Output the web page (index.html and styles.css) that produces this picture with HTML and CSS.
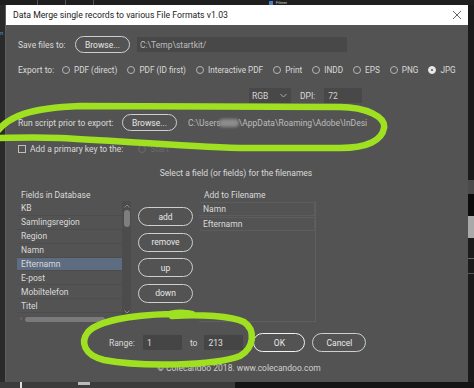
FILE: index.html
```html
<!DOCTYPE html>
<html>
<head>
<meta charset="utf-8">
<link rel="stylesheet" href="styles.css">
</head>
<body>
<div class="screen">
  <div class="topstrip">
    <span class="tsep s1"></span><span class="tsep s2"></span><span class="tsep s3"></span>
    <span class="filmer"><i class="ficon"></i>Filmer</span>
  </div>
  <div class="middle">
    <div class="leftstrip"><span class="lchar">n</span></div>
    <div class="dialog">
      <div class="titlebar">
        <span class="title">Data Merge single records to various File Formats v1.03</span>
        <svg class="close" width="10" height="10" viewBox="0 0 10 10"><path d="M1 1L9 9M9 1L1 9" stroke="#666" stroke-width="1" fill="none"/></svg>
      </div>
      <div class="dbody">
        <div class="row r-save">
          <span class="lbl w-save">Save files to:</span>
          <button class="pill b-save">Browse...</button>
          <div class="field pathfield">C:\Temp\startkit/</div>
        </div>
        <div class="row r-export">
          <span class="lbl w-export">Export to:</span>
          <div class="radios">
            <span class="radio"><i class="rc"></i>PDF (direct)</span>
            <span class="radio"><i class="rc"></i>PDF (ID first)</span>
            <span class="radio"><i class="rc"></i>Interactive PDF</span>
            <span class="radio"><i class="rc"></i>Print</span>
            <span class="radio"><i class="rc"></i>INDD</span>
            <span class="radio"><i class="rc"></i>EPS</span>
            <span class="radio"><i class="rc"></i>PNG</span>
            <span class="radio"><i class="rc on"></i>JPG</span>
          </div>
        </div>
        <div class="row r-rgb">
          <div class="select">RGB<svg class="chev" width="7" height="5" viewBox="0 0 7 5"><path d="M0.5 1L3.5 4L6.5 1" stroke="#aaa" fill="none"/></svg></div>
          <span class="lbl dpi-lbl">DPI:</span>
          <div class="field dpifield">72</div>
        </div>
        <div class="row r-run">
          <span class="lbl w-run">Run script prior to export:</span>
          <button class="pill b-run">Browse...</button>
          <span class="runpath">C:\Users<i class="blur"></i>\AppData\Roaming\Adobe\InDesi</span>
        </div>
        <div class="row r-check">
          <i class="cbox"></i><span class="lbl">Add a primary key to the:</span>
          <span class="disabled"><i class="rc dim"></i>Start</span>
        </div>
        <div class="row r-select">Select a field (or fields) for the filenames</div>
        <div class="row r-labels">
          <span class="lab-l">Fields in Database</span>
          <span class="lab-r">Add to Filename</span>
        </div>
        <div class="lists">
          <div class="listbox lb-left">
            <div class="items">
              <div class="item">KB</div>
              <div class="item">Samlingsregion</div>
              <div class="item">Region</div>
              <div class="item">Namn</div>
              <div class="item sel">Efternamn</div>
              <div class="item">E-post</div>
              <div class="item">Mobiltelefon</div>
              <div class="item">Titel</div>
              <div class="hscroll"><i class="harrow">‹</i><i class="hthumb"></i></div>
            </div>
            <div class="vscroll">
              <svg class="varrow" width="6" height="4" viewBox="0 0 6 4"><path d="M0.5 3.5L3 1L5.5 3.5" stroke="#8a8a8a" fill="none"/></svg>
              <i class="vthumb"></i>
              <svg class="varrow bottom" width="6" height="4" viewBox="0 0 6 4"><path d="M0.5 0.5L3 3L5.5 0.5" stroke="#8a8a8a" fill="none"/></svg>
            </div>
          </div>
          <div class="btncol">
            <button class="pill">add</button>
            <button class="pill">remove</button>
            <button class="pill">up</button>
            <button class="pill">down</button>
          </div>
          <div class="listbox lb-right">
            <div class="ritem">Namn</div>
            <div class="ritem">Efternamn</div>
          </div>
        </div>
        <div class="row r-bottom">
          <span class="lbl">Range:</span>
          <div class="field rfield f1">1</div>
          <span class="lbl to">to</span>
          <div class="field rfield f2">213</div>
          <button class="pill ok">OK</button>
          <button class="pill cancel">Cancel</button>
        </div>
        <div class="row r-copy">© Colecandoo 2018. www.colecandoo.com</div>
      </div>
    </div>
    <div class="rightstrip">
      <i class="rs a"></i><i class="rs b"></i><i class="rs c"></i><i class="rs d"></i><i class="rs e"></i>
    </div>
  </div>
  <div class="bottomstrip">
    <div class="bs-left"><i class="bi1"></i><i class="bi2"></i></div>
    <div class="bs-right"></div>
  </div>
  <svg class="marker" width="474" height="388" viewBox="0 0 474 388">
    <path d="M-4 133 C 8 116 30 108 80 106 L 340 107 C 366 107 386 117 384 128 C 382 140 368 148 340 148 L 240 148 C 180 146 120 141 60 138 C 30 137 10 138 -4 138" fill="none" stroke="#9fe021" stroke-width="6.5" stroke-linecap="round" stroke-linejoin="round"/>
    <path d="M172 316 C 200 314 232 316 244 322 C 256 330 254 348 240 356 C 214 366 140 367 104 360 C 84 355 80 342 88 332 C 98 321 130 315 170 314 C 180 312 190 313 192 314" fill="none" stroke="#9fe021" stroke-width="6.5" stroke-linecap="round" stroke-linejoin="round"/>
  </svg>
</div>
</body>
</html>
```
FILE: styles.css
```css
* { box-sizing: border-box; }
html, body { margin: 0; padding: 0; }
body {
  width: 474px; height: 388px; overflow: hidden;
  background: #1d1d1d;
  font-family: Roboto, "Liberation Sans", sans-serif;
  font-size: 8.5px;
  color: #dadada;
}
.screen { position: relative; width: 474px; height: 388px; display: flex; flex-direction: column; }
.topstrip { height: 5px; background: #1f1f1f; position: relative; display: flex; align-items: center; overflow: hidden; }
.tsep { width: 1px; height: 5px; background: #555; }
.s1 { margin-left: 37px; }
.s2 { margin-left: 27px; }
.s3 { margin-left: 27px; }
.filmer { margin-left: 175px; color: #cfcfcf; font-size: 4px; line-height: 4px; display: flex; align-items: center; }
.ficon { display: inline-block; width: 4px; height: 4px; background: #4a7dc9; margin-right: 3px; }

.middle { display: flex; height: 377px; }
.leftstrip { width: 5px; background: #2a2a2a; position: relative; }
.lchar { color: #5a8fc8; font-size: 6px; line-height: 6px; display: block; margin-top: 25px; margin-left: 0; }
.dialog { width: 463px; background: #535353; display: flex; flex-direction: column; border-left: 1px solid #5e5e5e; }
.titlebar { height: 20px; background: #fff; display: flex; align-items: center; padding-left: 7px; padding-right: 6px; }
.title { color: #222; font-size: 8.7px; flex: 1; }
.close { display: block; }

.dbody { padding-left: 12px; display: flex; flex-direction: column; }
.row { display: flex; align-items: center; }
.lbl { white-space: nowrap; }
.pill {
  background: transparent; border: 1px solid #cfcfcf; border-radius: 10px;
  color: #e8e8e8; font: inherit; padding: 0; display: flex; align-items: center; justify-content: center;
}
.field { background: #484848; color: #cfcfcf; display: flex; align-items: center; }

.r-save { margin-top: 11px; height: 17px; }
.w-save { width: 57px; }
.b-save { width: 55px; height: 17px; }
.pathfield { margin-left: 7px; width: 210px; height: 15px; padding-left: 3px; color: #bdbdbd; }

.r-export { margin-top: 10px; height: 14px; }
.w-export { width: 44px; }
.radios { display: flex; gap: 10px; font-size: 8.2px; }
.radio { display: flex; align-items: center; gap: 4px; white-space: nowrap; }
.rc { display: inline-block; width: 8px; height: 8px; border: 1px solid #b5b5b5; border-radius: 50%; }
.rc.on { background: #e6e6e6; border-color: #e6e6e6; position: relative; }
.rc.on::after { content: ""; position: absolute; left: 2px; top: 2px; width: 2px; height: 2px; border-radius: 50%; background: #555; }

.r-rgb { margin-top: 11px; height: 15px; }
.select { margin-left: 231px; width: 42px; height: 15px; background: #484848; display: flex; align-items: center; justify-content: space-between; padding: 0 4px 0 3px; color: #d6d6d6; }
.dpi-lbl { margin-left: 9px; }
.dpifield { margin-left: 9px; width: 38px; height: 15px; padding-left: 4px; }

.r-run { margin-top: 11px; height: 17px; }
.w-run { width: 104px; }
.b-run { width: 55px; height: 17px; }
.runpath { margin-left: 11px; color: #bdbdbd; display: flex; align-items: center; white-space: nowrap; }
.blur { display: inline-block; width: 20px; height: 8px; border-radius: 4px; background: #8c8c8c; filter: blur(1.5px); margin-left: -2px; }

.r-check { margin-top: 12px; height: 12px; }
.cbox { display: inline-block; width: 8px; height: 8px; border: 1px solid #bdbdbd; margin-right: 4px; }
.disabled { margin-left: 15px; color: #6a6a6a; display: flex; align-items: center; gap: 4px; }
.rc.dim { border-color: #6c6c6c; }

.r-select { margin-top: 11px; height: 14px; justify-content: center; padding-right: 14px; }
.r-labels { margin-top: 10px; height: 10px; }
.lab-l { margin-left: 3px; width: 183px; }

.lists { margin-top: 1px; height: 121px; display: flex; }
.listbox { display: flex; }
.lb-left { margin-left: -1px; width: 114px; height: 121px; }
.items { flex: 1; display: flex; flex-direction: column; padding-top: 1px; }
.item { height: 14.25px; padding-left: 4px; display: flex; align-items: center; border-bottom: 1px solid #4d4d4d; }
.item.sel { background: #5d6c80; }
.hscroll { margin-top: 3px; height: 6px; display: flex; align-items: center; padding-left: 3px; }
.harrow { font-style: normal; color: #8a8a8a; font-size: 7px; line-height: 6px; }
.hthumb { width: 80px; height: 5px; border-radius: 3px; background: #7a7a7a; margin-left: 3px; }
.vscroll { width: 9px; background: #4c4c4c; display: flex; flex-direction: column; align-items: center; padding-top: 3px; }
.varrow { display: block; }
.vthumb { width: 6px; height: 17px; border-radius: 3px; background: #7e7e7e; margin-top: 2px; }
.varrow.bottom { margin-top: auto; margin-bottom: 8px; }

.btncol { margin-left: 7px; width: 55px; display: flex; flex-direction: column; gap: 6.5px; padding-top: 6px; }
.btncol .pill { height: 19px; width: 55px; }

.lb-right { margin-left: 6px; width: 117px; flex-direction: column; border-right: 1px solid #5f5f5f; border-bottom: 1px solid #5f5f5f; padding-top: 1px; }
.ritem { height: 14px; padding-left: 4px; display: flex; align-items: center; border: 1px solid #5c5c5c; border-left: 0; margin-bottom: 1px; }

.r-bottom { margin-top: 11px; height: 19px; }
.r-bottom > .lbl:first-child { margin-left: 91px; }
.rfield { width: 39px; height: 15px; padding-left: 4px; background: #454545; color: #e0e0e0; }
.f1 { margin-left: 8px; }
.to { margin-left: 8px; }
.f2 { margin-left: 7px; }
.ok { margin-left: 10px; width: 52px; height: 19px; border: 1.5px solid #f2f2f2; }
.cancel { margin-left: 7px; width: 54px; height: 19px; }

.r-copy { margin-top: 10px; height: 12px; justify-content: center; padding-right: 8px; color: #cfcfcf; }

.rightstrip { flex: 1; background: #1b1b1b; display: flex; flex-direction: column; }
.rs { display: block; }
.rs.a { margin-top: 175px; height: 14px; background: #4b4b4b; }
.rs.b { height: 22px; background: #0c0c0c; }
.rs.c { height: 22px; background: #a9a9a9; }
.rs.d { margin-top: 20px; height: 1px; background: #666; }
.rs.e { margin-top: 14px; height: 1px; background: #555; }

.bottomstrip { height: 6px; display: flex; }
.bs-left { width: 235px; background: #3c3c3c; display: flex; }
.bi1 { margin-left: 20px; width: 2px; height: 6px; background: #ddd; }
.bi2 { margin-left: 56px; width: 12px; height: 3px; background: #bbb; }
.bs-right { flex: 1; background: #151515; }

.marker { position: absolute; left: 0; top: 0; pointer-events: none; }
```
